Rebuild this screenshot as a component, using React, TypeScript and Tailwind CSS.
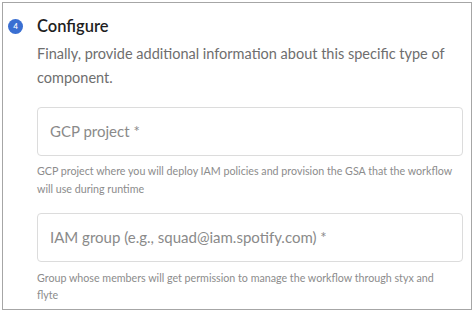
import React from "react";

export default function App() {
  const font = { fontFamily: "Lato, 'Noto Sans', sans-serif" };
  return (
    <div className="w-[474px] h-[313px] bg-white pt-[2px] pl-[2px]" style={font}>
      <div className="w-[470px] h-[308px] border-[1.5px] border-[#a6a6a6] bg-white overflow-hidden">
        <div className="flex items-center pl-[5px] pt-[7px] h-[32px] box-content">
          <div className="w-[15px] h-[15px] rounded-full bg-[#3a6fd2] flex items-center justify-center text-white text-[8px] font-semibold">
            4
          </div>
          <div className="ml-[14px] text-[16.5px] font-semibold text-[#1f1f1f]">Configure</div>
        </div>
        <div className="pl-[34px] pr-[14px] mt-[0px] text-[14.5px] leading-[24px] text-[#6e6e6e]">
          Finally, provide additional information about this specific type of component.
        </div>
        <div className="pl-[34px] pr-[8px] mt-[17px]">
          <div className="h-[49px] border border-[#dcdcdc] rounded-[4px] flex items-center pl-[12px] text-[15px] text-[#8a8a8a]">
            GCP project *
          </div>
          <div className="mt-[6px] text-[10.7px] leading-[18px] text-[#8c8c8c]">
            GCP project where you will deploy IAM policies and provision the GSA that the workflow will use during runtime
          </div>
          <div className="mt-[15px] h-[49px] border border-[#dcdcdc] rounded-[4px] flex items-center pl-[12px] text-[15px] text-[#8a8a8a]">
            IAM group (e.g., squad@iam.spotify.com) *
          </div>
          <div className="mt-[7px] text-[10.7px] leading-[17px] text-[#8c8c8c] pr-[6px]">
            Group whose members will get permission to manage the workflow through styx and flyte
          </div>
        </div>
      </div>
    </div>
  );
}
